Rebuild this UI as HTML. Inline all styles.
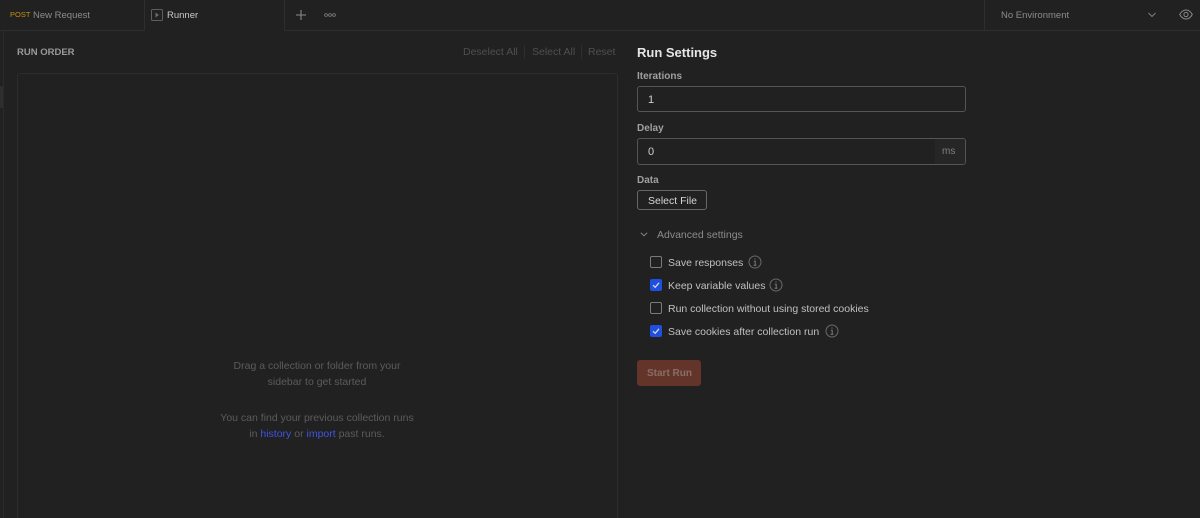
<!DOCTYPE html>
<html style="height:518px;overflow:hidden"><head><meta charset="utf-8"><style>
html,body{margin:0;padding:0;background:#212121}
body{width:1200px;height:518px;position:relative;overflow:hidden;font-family:"Liberation Sans",sans-serif;font-size:11px;color:#a6a6a6}
#w{position:absolute;left:0;top:0;width:1200px;height:518px;overflow:hidden}
.a{position:absolute;white-space:nowrap;line-height:14px}
.b{position:absolute;box-sizing:border-box}
.cb{position:absolute;left:650px;width:12px;height:12px;box-sizing:border-box;border:1px solid #7a7a7a;border-radius:2px}
.cb.on{background:#1f4fe0;border:0}
.cb svg,.i svg{display:block}
.i{position:absolute}
.l{color:#a0a0a0;font-weight:bold;font-size:10px}
.c{color:#c0c0c0;left:668px;font-size:10.5px}
.t{font-size:9.5px}
.m{color:#5c5c5c;font-size:10.5px;text-align:center;left:17px;width:600px}
</style></head><body><div id="w">
<!-- tab bar -->
<div class="b" style="left:0;top:30px;width:144px;height:1px;background:#2e2e2e"></div>
<div class="b" style="left:284px;top:30px;width:916px;height:1px;background:#2e2e2e"></div>
<div class="b" style="left:144px;top:0;width:1px;height:31px;background:#2e2e2e"></div>
<div class="b" style="left:284px;top:0;width:1px;height:31px;background:#2e2e2e"></div>
<div class="b" style="left:984px;top:0;width:1px;height:30px;background:#2e2e2e"></div>
<div class="b" style="left:3px;top:31px;width:1px;height:487px;background:#2a2a2a"></div>
<div class="b" style="left:0;top:86px;width:3px;height:22px;background:#2e2e2e"></div>
<div class="a" style="left:10px;top:8px;color:#c98f0c;font-size:7.5px">POST</div>
<div class="a t" style="left:33px;top:9px;color:#8c8c8c">New Request</div>
<div class="i" style="left:151px;top:9px"><svg width="12" height="12" viewBox="0 0 12 12"><rect x=".5" y=".5" width="11" height="11" rx="1" fill="none" stroke="#5e5e5e"/><path d="M4.500 3.500L8 6L4.500 8.500Z" fill="#6b6b6b"/></svg></div>
<div class="a t" style="left:167px;top:9px;color:#c9c9c9">Runner</div>
<div class="i" style="left:295px;top:9px"><svg width="12" height="12" viewBox="0 0 12 12"><path d="M6 1V11M1 6H11" stroke="#8a8a8a" stroke-width="1.100" fill="none"/></svg></div>
<div class="i" style="left:324px;top:12px"><svg width="12" height="6" viewBox="0 0 12 6"><circle cx="2" cy="3" r="1.400" fill="none" stroke="#808080" stroke-width=".8"/><circle cx="6" cy="3" r="1.400" fill="none" stroke="#808080" stroke-width=".8"/><circle cx="10" cy="3" r="1.400" fill="none" stroke="#808080" stroke-width=".8"/></svg></div>
<div class="a t" style="left:1001px;top:9px;color:#8c8c8c">No Environment</div>
<div class="i" style="left:1147px;top:12px"><svg width="10" height="6" viewBox="0 0 10 6"><path d="M1.500 1L5 4.500L8.500 1" fill="none" stroke="#808080" stroke-width="1"/></svg></div>
<div class="i" style="left:1179px;top:9px"><svg width="14" height="11" viewBox="0 0 14 11"><path d="M.7 5.500C2.500 2.300 4.700 1 7 1s4.500 1.300 6.300 4.500C11.500 8.700 9.300 10 7 10S2.500 8.700.7 5.500Z" fill="none" stroke="#8a8a8a"/><circle cx="7" cy="5.500" r="2.100" fill="none" stroke="#8a8a8a"/></svg></div>
<!-- left pane -->
<div class="a" style="left:17px;top:46px;font-weight:bold;font-size:9.500px;color:#9a9a9a">RUN ORDER</div>
<div class="a" style="left:463px;top:45px;color:#4f4f4f;font-size:10.500px">Deselect All</div>
<div class="b" style="left:524px;top:45px;width:1px;height:14px;background:#2e2e2e"></div>
<div class="a" style="left:532px;top:45px;color:#4f4f4f;font-size:10.500px">Select All</div>
<div class="b" style="left:581px;top:45px;width:1px;height:14px;background:#2e2e2e"></div>
<div class="a" style="left:588px;top:45px;color:#4f4f4f;font-size:10.500px">Reset</div>
<div class="b" style="left:17px;top:73px;width:601px;height:460px;border:1px solid #2d2d2d;border-radius:3px"></div>
<div class="a m" style="top:359px">Drag a collection or folder from your</div>
<div class="a m" style="top:375px">sidebar to get started</div>
<div class="a m" style="top:411px">You can find your previous collection runs</div>
<div class="a m" style="top:427px">in <span style="color:#3f55e0">history</span> or <span style="color:#3f55e0">import</span> past runs.</div>
<!-- right pane -->
<div class="a" style="left:637px;top:45px;font-weight:bold;font-size:13px;color:#e6e6e6;line-height:16px">Run Settings</div>
<div class="a l" style="left:637px;top:70px">Iterations</div>
<div class="b" style="left:637px;top:86px;width:329px;height:26px;border:1px solid #555;border-radius:3px"></div>
<div class="a" style="left:648px;top:93px;color:#d0d0d0;font-size:11px">1</div>
<div class="a l" style="left:637px;top:122px">Delay</div>
<div class="b" style="left:637px;top:138px;width:329px;height:27px;border:1px solid #555;border-radius:3px"></div>
<div class="b" style="left:935px;top:139px;width:30px;height:25px;background:#262626;border-radius:0 2px 2px 0"></div>
<div class="a" style="left:648px;top:145px;color:#d0d0d0;font-size:11px">0</div>
<div class="a" style="left:942px;top:145px;color:#808080;font-size:10px">ms</div>
<div class="a l" style="left:637px;top:174px">Data</div>
<div class="b" style="left:637px;top:190px;width:70px;height:20px;border:1px solid #666;border-radius:3px"></div>
<div class="a" style="left:648px;top:194px;color:#d8d8d8;font-size:10.500px">Select File</div>
<div class="i" style="left:640px;top:232px"><svg width="8" height="5" viewBox="0 0 8 5"><path d="M.8 .8L4 3.800L7.200 .8" fill="none" stroke="#808080" stroke-width="1"/></svg></div>
<div class="a" style="left:657px;top:228px;color:#8c8c8c;font-size:10.500px">Advanced settings</div>

<div class="cb" style="top:256px"></div>
<div class="a c" style="top:256px">Save responses</div>
<div class="i" style="left:748px;top:255px"><svg width="14" height="14" viewBox="0 0 14 14"><circle cx="7" cy="7" r="6" fill="none" stroke="#6a6a6a"/><path d="M7 3.500V4.600M5.800 6.200H7.200V10M5.600 10.200H8.400" fill="none" stroke="#7a7a7a"/></svg></div>

<div class="cb on" style="top:279px"><svg width="12" height="12" viewBox="0 0 12 12"><path d="M3 6.200L5.200 8.300L9 3.800" fill="none" stroke="#d8d8d8" stroke-width="1.300"/></svg></div>
<div class="a c" style="top:279px">Keep variable values</div>
<div class="i" style="left:769px;top:278px"><svg width="14" height="14" viewBox="0 0 14 14"><circle cx="7" cy="7" r="6" fill="none" stroke="#6a6a6a"/><path d="M7 3.500V4.600M5.800 6.200H7.200V10M5.600 10.200H8.400" fill="none" stroke="#7a7a7a"/></svg></div>

<div class="cb" style="top:302px"></div>
<div class="a c" style="top:302px">Run collection without using stored cookies</div>

<div class="cb on" style="top:325px"><svg width="12" height="12" viewBox="0 0 12 12"><path d="M3 6.200L5.200 8.300L9 3.800" fill="none" stroke="#d8d8d8" stroke-width="1.300"/></svg></div>
<div class="a c" style="top:325px">Save cookies after collection run</div>
<div class="i" style="left:825px;top:324px"><svg width="14" height="14" viewBox="0 0 14 14"><circle cx="7" cy="7" r="6" fill="none" stroke="#6a6a6a"/><path d="M7 3.500V4.600M5.800 6.200H7.200V10M5.600 10.200H8.400" fill="none" stroke="#7a7a7a"/></svg></div>

<div class="b" style="left:637px;top:360px;width:64px;height:26px;background:#63352a;border-radius:3px"></div>
<div class="a" style="left:647px;top:367px;color:#8a6d65;font-weight:bold;font-size:10px">Start Run</div>
</div></body></html>
